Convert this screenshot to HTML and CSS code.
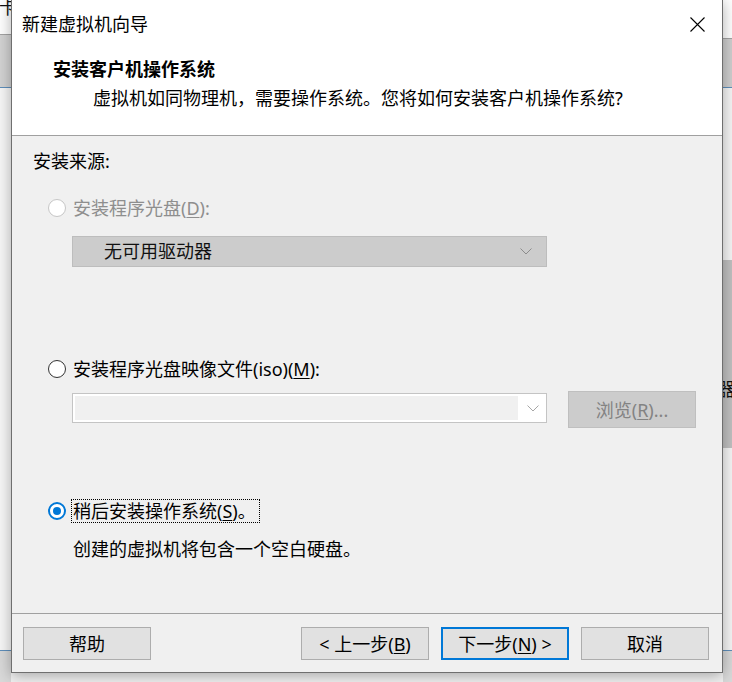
FILE: index.html
```html
<!DOCTYPE html>
<html lang="zh-CN">
<head>
<meta charset="utf-8">
<title>新建虚拟机向导</title>
<link rel="stylesheet" href="styles.css">
</head>
<body>
<div class="desktop">
  <div class="strip strip-left">
    <div class="bg-top"><span class="bg-char">卡</span></div>
    <div class="bg-band"></div>
    <div class="bg-content"></div>
    <div class="bg-bottom"></div>
  </div>
  <div class="strip-mid"></div>
  <div class="strip strip-right">
    <div class="bg-top bg-top-r"></div>
    <div class="bg-band bg-band-r"></div>
    <div class="bg-content-r1"></div>
    <div class="bg-panel"><span class="bg-char2">器</span></div>
    <div class="bg-content-r2"></div>
    <div class="bg-bottom"></div>
  </div>
</div>

<div class="dialog">
  <div class="titlebar">
    <span class="title">新建虚拟机向导</span>
    <svg class="close" width="15" height="15" viewBox="0 0 15 15"><path d="M0.5 0.5 L14.5 14.5 M14.5 0.5 L0.5 14.5" stroke="#000" stroke-width="1.1" fill="none"/></svg>
  </div>
  <div class="header">
    <div class="h-title">安装客户机操作系统</div>
    <div class="h-sub">虚拟机如同物理机，需要操作系统。您将如何安装客户机操作系统?</div>
  </div>
  <div class="body">
    <div class="group-label">安装来源:</div>
    <div class="option option-1">
      <span class="radio radio-disabled"></span>
      <span class="opt-label opt-disabled">安装程序光盘(<u>D</u>):</span>
    </div>
    <div class="combo combo-disabled">
      <span class="combo-text">无可用驱动器</span>
      <span class="combo-arrow"><svg width="12" height="7" viewBox="0 0 12 7"><polyline points="0.5,0.5 6,6 11.5,0.5" fill="none" stroke="#8c8c8c" stroke-width="1"/></svg></span>
    </div>
    <div class="option option-2">
      <span class="radio"></span>
      <span class="opt-label">安装程序光盘映像文件(iso)(<u>M</u>):</span>
    </div>
    <div class="iso-row">
      <div class="combo combo-iso">
        <span class="combo-edit"></span>
        <span class="combo-arrow"><svg width="12" height="7" viewBox="0 0 12 7"><polyline points="0.5,0.5 6,6 11.5,0.5" fill="none" stroke="#a6a6a6" stroke-width="1"/></svg></span>
      </div>
      <div class="btn btn-disabled">浏览(<u>R</u>)...</div>
    </div>
    <div class="option option-3">
      <span class="radio radio-checked"><span class="dot"></span></span>
      <span class="opt-label focus">稍后安装操作系统(<u>S</u>)。</span>
    </div>
    <div class="desc">创建的虚拟机将包含一个空白硬盘。</div>
  </div>
  <div class="footer">
    <div class="btn">帮助</div>
    <div class="btn btn-back">&lt; 上一步(<u>B</u>)</div>
    <div class="btn btn-default">下一步(<u>N</u>) &gt;</div>
    <div class="btn btn-cancel">取消</div>
  </div>
</div>
</body>
</html>
```

FILE: styles.css
```css
* { box-sizing: border-box; }
html, body { margin: 0; padding: 0; }
body {
  width: 732px;
  height: 682px;
  overflow: hidden;
  position: relative;
  font-family: "Noto Sans", "Noto Sans CJK SC", sans-serif;
  font-size: 18px;
  color: #000;
  background: #fff;
}

/* background application behind the dialog */
.desktop {
  display: grid;
  grid-template-columns: 11px 1fr 9px;
  height: 682px;
}
.strip { display: flex; flex-direction: column; overflow: hidden; }
.strip-mid { background: #f4f4f4; }
.bg-top {
  height: 35px;
  background: #fff;
  border-bottom: 1px solid #a3a3a3;
  overflow: hidden;
}
.bg-top-r { height: 39px; }
.bg-char {
  display: block;
  margin-left: -1px;
  margin-top: -4px;
  font-size: 18px;
  line-height: 22px;
  color: #111;
}
.bg-band {
  height: 53px;
  background: #d3d3d3;
  border-bottom: 1px solid #5f8fbb;
}
.bg-band-r { height: 49px; background: #cfcfcf; }
.bg-content {
  height: 563px;
  background: #f7f7f7;
  border-bottom: 1px solid #5f8fbb;
}
.bg-content-r1 { height: 172px; background: #f6f6f6; }
.bg-panel {
  height: 188px;
  background: #c1c1c1;
  overflow: hidden;
}
.bg-char2 {
  display: block;
  margin-top: 117px;
  margin-left: -6px;
  font-size: 18px;
  line-height: 24px;
  color: #111;
  white-space: nowrap;
}
.bg-content-r2 {
  height: 203px;
  background: #f6f6f6;
  border-bottom: 1px solid #5f8fbb;
}
.bg-bottom { flex: 1; background: #d9d9d9; }

/* dialog window */
.dialog {
  position: absolute;
  left: 11px;
  top: -1px;
  width: 712px;
  height: 674px;
  border: 1px solid #6f6f6f;
  background: #f0f0f0;
  display: flex;
  flex-direction: column;
  box-shadow: 0 3px 14px rgba(0, 0, 0, 0.32);
}
.titlebar {
  height: 47px;
  padding: 1px 17px 0 10px;
  background: #fff;
  display: flex;
  align-items: center;
  justify-content: space-between;
}
.title { line-height: 24px; }
.close { display: block; }

.header {
  height: 89px;
  background: #fff;
  border-bottom: 1px solid #a0a0a0;
  padding: 10px 0 0 41px;
}
.h-title {
  font-weight: 700;
  line-height: 24px;
}
.h-sub {
  margin-top: 5px;
  margin-left: 40px;
  line-height: 24px;
}

.body {
  flex: 1;
  padding: 13px 0 0 21px;
}
.group-label { line-height: 24px; }

.option {
  display: flex;
  align-items: center;
  height: 24px;
  margin-left: 15px;
}
.option-1 { margin-top: 23px; }
.option-2 { margin-top: 90px; }
.option-3 { margin-top: 71px; }

.radio {
  width: 18px;
  height: 18px;
  border-radius: 50%;
  border: 1px solid #333;
  background: #fff;
  flex: none;
  margin-right: 7px;
  display: flex;
  align-items: center;
  justify-content: center;
}
.radio-disabled { border-color: #c6c6c6; }
.radio-checked { border: 2px solid #0078d7; margin-right: 5px; }
.dot {
  width: 8px;
  height: 8px;
  border-radius: 50%;
  background: #0078d7;
}
.opt-label { line-height: 24px; white-space: nowrap; }
.opt-disabled { color: #8e8e8e; }
.focus {
  border: 1px dotted #000;
  padding: 0 3px 0 1px;
  line-height: 22px;
}
u { text-underline-offset: 2px; }

.combo {
  display: flex;
  width: 475px;
  margin-left: 39px;
}
.combo-disabled {
  margin-top: 16px;
  height: 31px;
  background: #cccccc;
  border: 1px solid #bdbdbd;
}
.combo-text {
  flex: 1;
  padding-left: 31px;
  line-height: 29px;
  color: #111;
}
.combo-arrow {
  width: 29px;
  display: flex;
  align-items: center;
  justify-content: flex-start;
  padding-left: 3px;
}
.iso-row {
  display: flex;
  align-items: flex-start;
  margin-top: 10px;
}
.combo-iso {
  margin-top: 2px;
  height: 30px;
  background: #fff;
  border: 1px solid #c4c4c4;
  padding: 2px 0 2px 2px;
}
.combo-edit {
  flex: 1;
  background: #f0f0f0;
}
.combo-iso .combo-arrow { width: 28px; padding-left: 9px; }

.btn {
  width: 128px;
  height: 33px;
  background: #e1e1e1;
  border: 1px solid #adadad;
  display: flex;
  align-items: center;
  justify-content: center;
  line-height: 24px;
  white-space: nowrap;
  flex: none;
}
.btn-disabled {
  height: 37px;
  margin-left: 21px;
  background: #cccccc;
  border-color: #bfbfbf;
  color: #838383;
}
.desc {
  margin-top: 14px;
  margin-left: 40px;
  line-height: 24px;
}

.footer {
  height: 59px;
  border-top: 1px solid #a0a0a0;
  padding: 13px 13px 0 11px;
  display: flex;
  align-items: flex-start;
}
.btn-back { margin-left: auto; }
.btn-default {
  margin-left: 12px;
  border: 2px solid #0078d7;
}
.btn-cancel { margin-left: 12px; }
```
